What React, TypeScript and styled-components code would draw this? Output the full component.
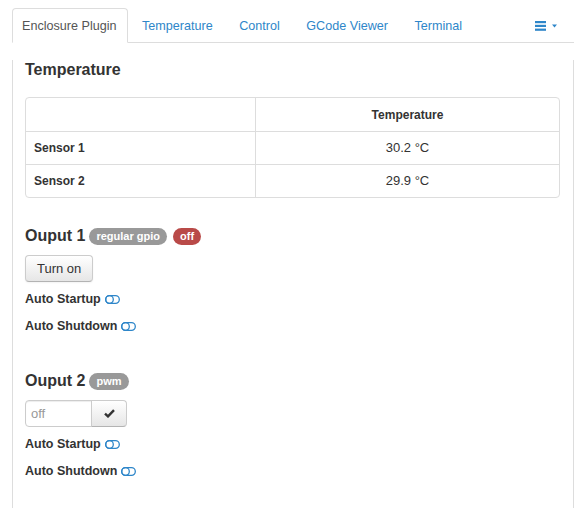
import React from 'react';
import styled, {createGlobalStyle} from 'styled-components';

const GlobalStyle = createGlobalStyle`
    body {
        margin: 0;
        background: #ffffff;
        font-family: "Liberation Sans", Arial, sans-serif;
        color: #333333;
    }
`;

const tabs = ['Enclosure Plugin', 'Temperature', 'Control', 'GCode Viewer', 'Terminal'];

const sensors = [
    {name: 'Sensor 1', value: '30.2 °C'},
    {name: 'Sensor 2', value: '29.9 °C'},
];

const ToggleOff = () => (
    <svg width="15" height="9" viewBox="0 0 15 9" fill="none" stroke="#2e86c9" strokeWidth="1.3">
        <rect x="0.7" y="0.7" width="13.6" height="7.6" rx="3.8"/>
        <circle cx="4.5" cy="4.5" r="3.8"/>
    </svg>
);

const BarsIcon = () => (
    <svg width="24" height="10" viewBox="0 0 24 10" fill="#2e86c9">
        <rect x="0" y="0" width="11" height="2.2"/>
        <rect x="0" y="3.8" width="11" height="2.2"/>
        <rect x="0" y="7.6" width="11" height="2.2"/>
        <path d="M17 3.5 L22 3.5 L19.5 6.5 Z"/>
    </svg>
);

const CheckIcon = () => (
    <svg width="11" height="9" viewBox="0 0 11 9" fill="none" stroke="#333" strokeWidth="2.4">
        <path d="M1 4.6 L4 7.4 L10 1.2"/>
    </svg>
);

const AutoRows = () => (
    <>
        <AutoRow>Auto Startup <ToggleOff/></AutoRow>
        <AutoRow>Auto Shutdown <ToggleOff/></AutoRow>
    </>
);

export default function App() {
    return (
        <Page>
            <GlobalStyle/>
            <TabBar>
                {tabs.map((t, i) => (
                    <Tab key={t} $active={i === 0}>{t}</Tab>
                ))}
                <MenuTab><BarsIcon/></MenuTab>
            </TabBar>
            <Panel>
                <Heading>Temperature</Heading>
                <Table>
                    <thead>
                    <tr>
                        <HeadCell/>
                        <HeadCell $center>Temperature</HeadCell>
                    </tr>
                    </thead>
                    <tbody>
                    {sensors.map(s => (
                        <tr key={s.name}>
                            <NameCell>{s.name}</NameCell>
                            <ValueCell>{s.value}</ValueCell>
                        </tr>
                    ))}
                    </tbody>
                </Table>

                <Output $top={28}>
                    <OutputTitle>
                        Ouput 1
                        <Badge>regular gpio</Badge>
                        <Badge $color="#b94a48">off</Badge>
                    </OutputTitle>
                    <Button>Turn on</Button>
                    <AutoRows/>
                </Output>

                <Output $top={35}>
                    <OutputTitle>
                        Ouput 2
                        <Badge>pwm</Badge>
                    </OutputTitle>
                    <InputGroup>
                        <Input placeholder="off"/>
                        <AddOnButton><CheckIcon/></AddOnButton>
                    </InputGroup>
                    <AutoRows/>
                </Output>
            </Panel>
        </Page>
    );
}

const Page = styled.div`
    padding: 8px 13px 0 12px;
`;

const TabBar = styled.ul`
    display: flex;
    list-style: none;
    margin: 0;
    padding: 0;
    border-bottom: 1px solid #dddddd;
`;

const Tab = styled.li<{ $active?: boolean }>`
    padding: 8px 11.5px 7px;
    margin-right: 1.5px;
    margin-bottom: -1px;
    font-size: 12.6px;
    line-height: 18px;
    color: ${p => p.$active ? '#555555' : '#2e86c9'};
    background: ${p => p.$active ? '#ffffff' : 'transparent'};
    border: 1px solid ${p => p.$active ? '#dddddd' : 'transparent'};
    border-bottom-color: ${p => p.$active ? '#ffffff' : 'transparent'};
    border-radius: 4px 4px 0 0;

    &:first-child {
        padding: 8px 10px 7px 9px;
        margin-right: 2px;
    }
`;

const MenuTab = styled.li`
    margin-left: auto;
    padding: 8px 14px 7px 12px;
    display: flex;
    align-items: center;
    border: 1px solid transparent;
`;

const Panel = styled.div`
    box-sizing: border-box;
    min-height: 466px;
    border: 1px solid #dddddd;
    border-top: none;
    padding: 0 13px 0 12px;
`;

const Heading = styled.h4`
    margin: 17px 0 17px;
    font-size: 16px;
    line-height: 20px;
    font-weight: 700;
    color: #333333;
`;

const Table = styled.table`
    width: 100%;
    border-collapse: separate;
    border-spacing: 0;
    border: 1px solid #dddddd;
    border-radius: 4px;
    font-size: 12px;
    line-height: 16px;

    td, th {
        padding: 8px;
        border-top: 1px solid #dddddd;
    }

    td + td, th + th {
        border-left: 1px solid #dddddd;
    }

    thead th {
        border-top: none;
        height: 17px;
    }
`;

const HeadCell = styled.th<{ $center?: boolean }>`
    width: ${p => p.$center ? 'auto' : '213px'};
    text-align: ${p => p.$center ? 'center' : 'left'};
    font-weight: 700;
`;

const NameCell = styled.td`
    font-weight: 700;
`;

const ValueCell = styled.td`
    text-align: center;
    font-size: 13px;
`;

const Output = styled.section<{ $top: number }>`
    margin-top: ${p => p.$top}px;
`;

const OutputTitle = styled.h4`
    display: flex;
    align-items: center;
    gap: 4px;
    margin: 0;
    font-size: 16px;
    line-height: 20px;
    font-weight: 700;
`;

const Badge = styled.span<{ $color?: string }>`
    display: inline-block;
    padding: 1px 7px 2px;
    border-radius: 9px;
    background: ${p => p.$color || '#999999'};
    color: #ffffff;
    font-size: 11px;
    line-height: 14px;
    font-weight: 700;

    & + & {
        margin-left: 2px;
    }
`;

const Button = styled.button`
    display: block;
    margin-top: 9px;
    height: 27px;
    padding: 0 11px;
    font-family: inherit;
    font-size: 13px;
    color: #333333;
    background: linear-gradient(#ffffff, #e6e6e6);
    border: 1px solid #cccccc;
    border-bottom-color: #b3b3b3;
    border-radius: 4px;
    box-shadow: inset 0 1px 0 rgba(255, 255, 255, 0.2), 0 1px 2px rgba(0, 0, 0, 0.05);
`;

const InputGroup = styled.div`
    display: flex;
    margin-top: 9px;
    height: 27px;
`;

const Input = styled.input`
    box-sizing: border-box;
    width: 67px;
    height: 27px;
    padding: 0 5px;
    font-family: inherit;
    font-size: 13px;
    border: 1px solid #cccccc;
    border-radius: 4px 0 0 4px;
    box-shadow: inset 0 1px 1px rgba(0, 0, 0, 0.075);

    &::placeholder {
        color: #999999;
    }
`;

const AddOnButton = styled.button`
    box-sizing: border-box;
    width: 36px;
    height: 27px;
    display: flex;
    align-items: center;
    justify-content: center;
    margin-left: -1px;
    background: linear-gradient(#ffffff, #e6e6e6);
    border: 1px solid #cccccc;
    border-bottom-color: #b3b3b3;
    border-radius: 0 4px 4px 0;
`;

const AutoRow = styled.div`
    display: flex;
    align-items: center;
    gap: 4px;
    margin-top: 7px;
    font-size: 12.5px;
    line-height: 20px;
    font-weight: 700;
`;
